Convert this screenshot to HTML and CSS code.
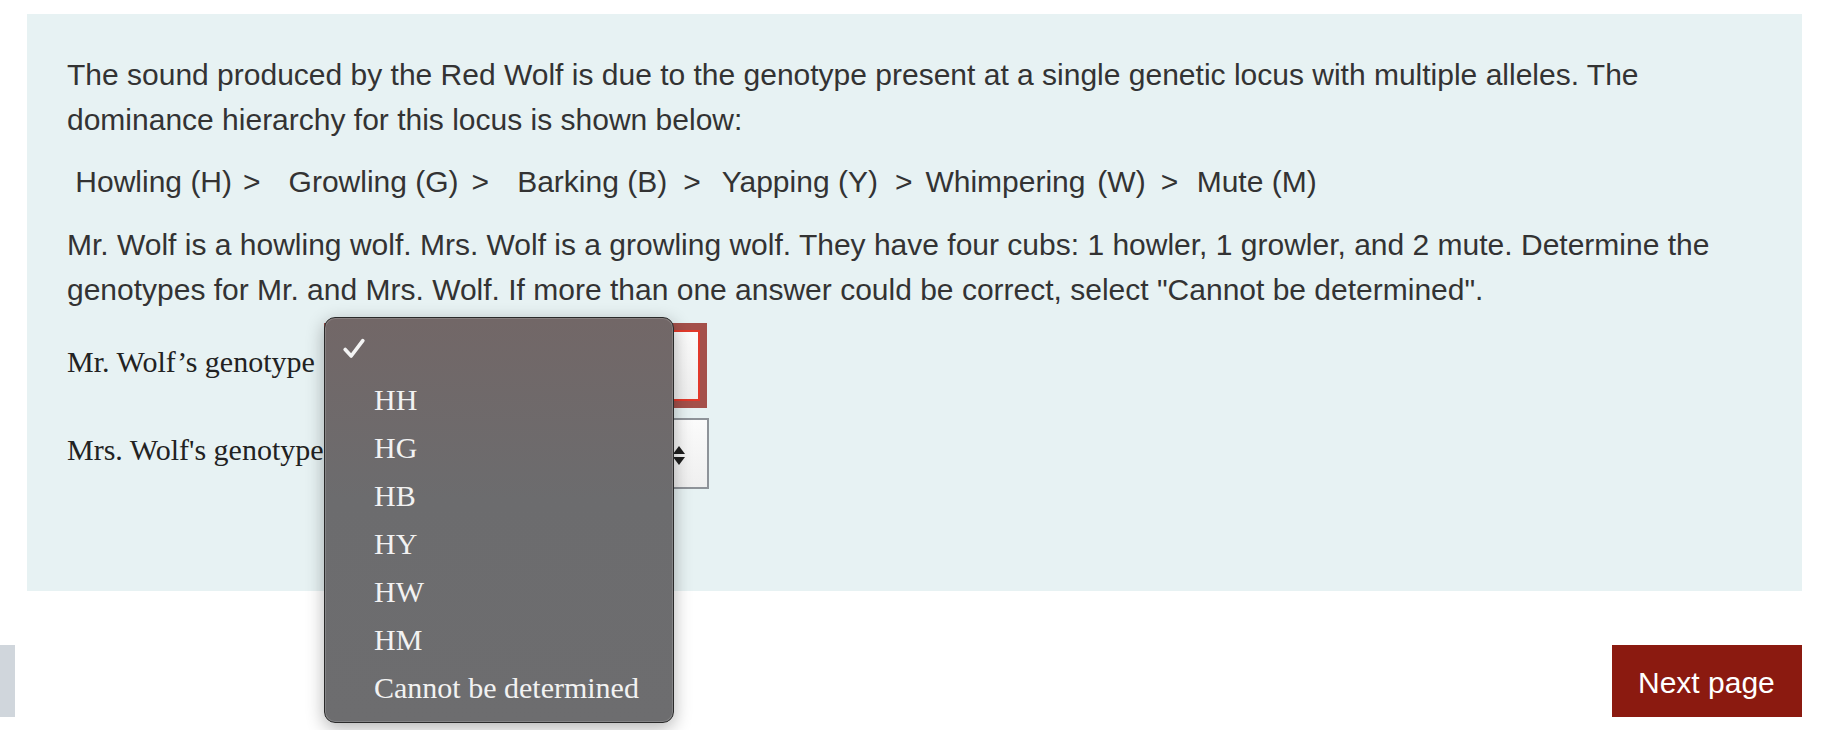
FILE: index.html
```html
<!DOCTYPE html>
<html lang="en">
<head>
<meta charset="utf-8">
<title>Red Wolf genotypes</title>
<link rel="stylesheet" href="styles.css">
</head>
<body>
<div class="page">
  <div class="panel">
    <p class="q">The sound produced by the Red Wolf is due to the genotype present at a single genetic locus with multiple alleles. The dominance hierarchy for this locus is shown below:</p>
    <p class="q hier">&nbsp;Howling (H)<span class="gt g1">&gt;</span>Growling (G)<span class="gt g2">&gt;</span>Barking (B)<span class="gt g3">&gt;</span>Yapping (Y)<span class="gt g4">&gt;</span>Whimpering <span class="wsp">(W)</span><span class="gt g5">&gt;</span>Mute (M)</p>
    <p class="q p3">Mr. Wolf is a howling wolf. Mrs. Wolf is a growling wolf. They have four cubs: 1 howler, 1 growler, and 2 mute. Determine the genotypes for Mr. and Mrs. Wolf. If more than one answer could be correct, select "Cannot be determined".</p>
    <div class="form">
      <div class="row">
        <label class="lbl">Mr. Wolf’s genotype</label>
        <div class="sel focus"></div>
      </div>
      <div class="row">
        <label class="lbl">Mrs. Wolf's genotype</label>
        <div class="sel">
          <svg class="arrows" width="12" height="20" viewBox="0 0 12 20"><path d="M0 8 L6 0 L12 8 Z M0 11 L12 11 L6 19 Z" fill="#1f1f1f"/></svg>
        </div>
      </div>
    </div>
  </div>
  <div class="footer">
    <div class="leftbar"></div>
    <button class="next">Next page</button>
  </div>
  <div class="menu">
    <div class="item"><span class="chk"><svg width="22" height="20" viewBox="0 0 22 20"><path d="M2.2 11.5 L8.2 18 L19.8 2.6" fill="none" stroke="#f4f4f4" stroke-width="3.6" stroke-linecap="round" stroke-linejoin="round"/></svg></span></div>
    <div class="item"><span class="chk"></span>HH</div>
    <div class="item"><span class="chk"></span>HG</div>
    <div class="item"><span class="chk"></span>HB</div>
    <div class="item"><span class="chk"></span>HY</div>
    <div class="item"><span class="chk"></span>HW</div>
    <div class="item"><span class="chk"></span>HM</div>
    <div class="item"><span class="chk"></span>Cannot be determined</div>
  </div>
</div>
</body>
</html>
```

FILE: styles.css
```css
html, body {
  margin: 0;
  padding: 0;
  background: #ffffff;
}

.page {
  position: relative;
  width: 1838px;
  height: 730px;
  padding-top: 14px;
  box-sizing: border-box;
  overflow: hidden;
}

.panel {
  margin: 0 36px 0 27px;
  background: #e7f2f3;
  padding: 38px 40px 102px 40px;
}

.q {
  margin: 0;
  font-family: "Liberation Sans", Arial, sans-serif;
  font-size: 30px;
  line-height: 45px;
  color: #333333;
}

.hier {
  margin-top: 17px;
}

.gt { display: inline-block; }
.g1 { margin: 0 28px 0 11px; }
.g2 { margin: 0 28px 0 13px; }
.g3 { margin: 0 21px 0 16px; }
.g4 { margin: 0 13px 0 17px; }
.g5 { margin: 0 18.5px 0 15px; }
.wsp { display: inline-block; margin-left: 3.5px; }

.p3 {
  margin-top: 18px;
}

.form {
  margin-top: 18px;
  display: flex;
  flex-direction: column;
  gap: 17px;
}

.row {
  display: flex;
  align-items: flex-start;
}

.lbl {
  font-family: "Liberation Serif", "Times New Roman", serif;
  font-size: 30px;
  line-height: 32px;
  color: #222222;
  margin-top: 16px;
}

.sel {
  margin-left: 16px;
  width: 369px;
  height: 71px;
  box-sizing: border-box;
  border: 2px solid #8e9399;
  background: linear-gradient(#fbfbfb, #efefef);
  display: flex;
  justify-content: flex-end;
  align-items: flex-start;
  padding: 26px 22px 0 0;
}

.sel.focus {
  border-color: #e2392b;
  box-shadow: 0 0 0 7px #a4504a;
}

.footer {
  margin-top: 54px;
  padding-right: 36px;
  display: flex;
  justify-content: space-between;
  align-items: flex-start;
}

.leftbar {
  width: 15px;
  height: 72px;
  background: #d0d6dc;
}

.next {
  width: 190px;
  height: 72px;
  border: 0;
  margin: 0;
  background: #8b1a10;
  color: #ffffff;
  font-family: "Liberation Sans", Arial, sans-serif;
  font-size: 30px;
  text-align: left;
  padding: 3px 0 0 26px;
}

.menu {
  position: absolute;
  left: 324px;
  top: 317px;
  width: 350px;
  box-sizing: border-box;
  padding: 10px 0 10px 0;
  border: 1px solid #2a2a2a;
  border-radius: 11px;
  background: linear-gradient(#726767, #6c6c6e 45%, #6d6d6f);
  box-shadow: 0 5px 18px rgba(0, 0, 0, 0.3), inset 0 0 0 1px rgba(255, 255, 255, 0.16);
}

.item {
  display: flex;
  align-items: flex-start;
  height: 48px;
  padding-left: 18px;
  font-family: "Liberation Serif", "Times New Roman", serif;
  font-size: 30px;
  line-height: 48px;
  color: #f2f2f2;
}

.chk {
  width: 31px;
  height: 48px;
  flex: none;
  display: block;
  padding-top: 10px;
  box-sizing: border-box;
}

.chk svg {
  display: block;
}
```
